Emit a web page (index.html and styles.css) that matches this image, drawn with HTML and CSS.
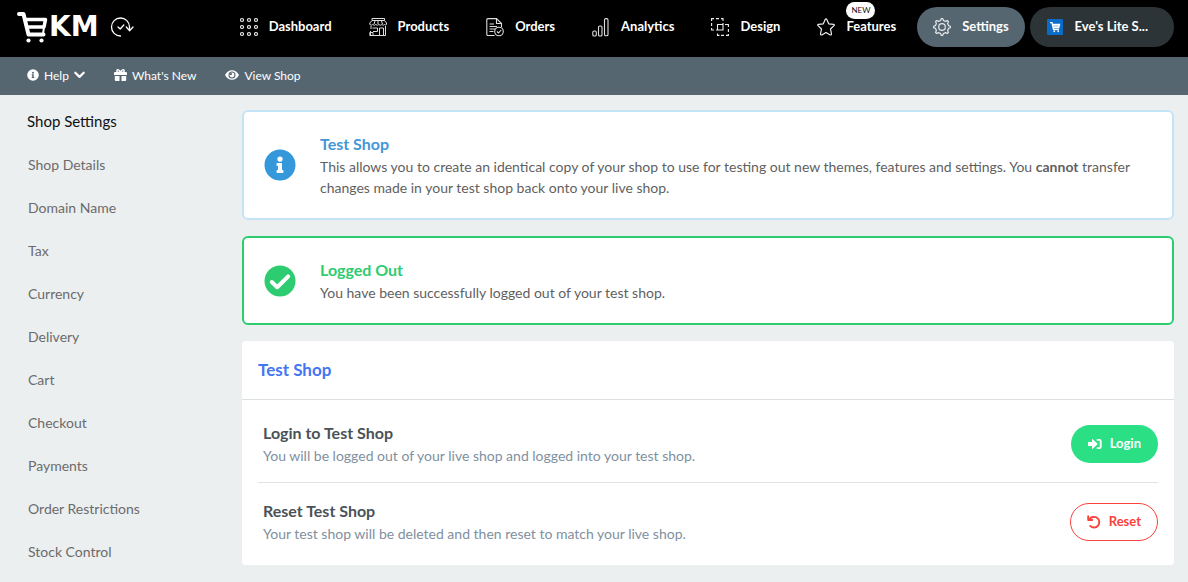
FILE: index.html
```html
<!DOCTYPE html>
<html lang="en">
<head>
<meta charset="utf-8">
<meta name="viewport" content="width=device-width, initial-scale=1">
<title>Test Shop</title>
<link rel="stylesheet" href="styles.css">
</head>
<body>
<header class="topbar">
  <a class="logo" href="#" aria-label="EKM home">
    <svg width="32" height="32" viewBox="0 0 32 32" fill="none" stroke="#fff" stroke-linecap="round" stroke-linejoin="round">
      <path d="M2 3H6.500L11.500 23.500H26.500" stroke-width="4"/>
      <path d="M8.500 8.500H28.500L27 16H12" stroke-width="3.500"/>
      <path d="M27 16L26 23" stroke-width="2"/>
      <circle cx="11.500" cy="29.500" r="2.100" fill="#fff" stroke="none"/>
      <circle cx="24.500" cy="29.500" r="2.100" fill="#fff" stroke="none"/>
    </svg>
    <span class="logo-text">KM</span>
  </a>
  <button class="sync" type="button" aria-label="Status">
    <svg width="24" height="22" viewBox="0 0 24 22" fill="none" stroke="#fff" stroke-width="1.300" stroke-linecap="round" stroke-linejoin="round">
      <path d="M10.500 20A9 9 0 1 1 19.500 11V14"/>
      <path d="M16.300 11L19.600 14.700L23 11"/>
      <path d="M8 11L10.200 13L13.800 9"/>
    </svg>
  </button>
  <nav class="mainnav" aria-label="Main">
    <a class="nav-item" href="#">
      <svg class="nav-icon" viewBox="0 0 18 18" fill="none" stroke="#eee" stroke-width="1.200"><circle cx="2" cy="2" r="1.500"/><circle cx="9" cy="2" r="1.500"/><circle cx="16" cy="2" r="1.500"/><circle cx="2" cy="9" r="1.500"/><circle cx="9" cy="9" r="1.500"/><circle cx="16" cy="9" r="1.500"/><circle cx="2" cy="16" r="1.500"/><circle cx="9" cy="16" r="1.500"/><circle cx="16" cy="16" r="1.500"/></svg>
      <span>Dashboard</span>
    </a>
    <a class="nav-item" href="#">
      <svg class="nav-icon" viewBox="0 0 18 18" fill="none" stroke="#ddd" stroke-width="1"><path d="M3 .5H15.500V2.500H3ZM3 2.500L.8 5V6.500Q2.300 8 3.800 6.500Q5.300 8 6.800 6.500Q8.300 8 9.800 6.500Q11.300 8 12.800 6.500Q14.300 8 15.500 6.500Q16.500 7.500 17.500 6.500V5L15.500 2.500M6 3L5 6M9 3V6M12.500 3L13.500 6M16.500 8V17.500H1.500V13M2 8V11M3.500 10H8.500V13.500H4M10.500 17V10H14.500V17M.8 14.500H4V17.500H.8Z"/></svg>
      <span>Products</span>
    </a>
    <a class="nav-item" href="#">
      <svg class="nav-icon" viewBox="0 0 18 18" fill="none" stroke="#ddd" stroke-width="1.100"><path d="M8.500 17.500H2Q.8 17.500.8 16V2Q.8.600 2 .6H10.500L15.500 5.500V9M10.500.6V5.500H15.500M3.500 6H8M3.500 8.500H11M3.500 11H9M3.500 13.500H7.500"/><circle cx="13" cy="13.500" r="4.300"/><path d="M11 13.500L12.500 15L15.200 12"/></svg>
      <span>Orders</span>
    </a>
    <a class="nav-item" href="#">
      <svg class="nav-icon" viewBox="0 0 18 18" fill="none" stroke="#ddd" stroke-width="1.100"><rect x=".8" y="13" width="3.500" height="5" rx="1.300"/><rect x="6.500" y="8" width="3.500" height="10" rx="1.300"/><rect x="12.500" y=".600" width="3.500" height="17.200" rx="1.300"/></svg>
      <span>Analytics</span>
    </a>
    <a class="nav-item" href="#">
      <svg class="nav-icon" viewBox="0 0 18 18" fill="none" stroke="#eee" stroke-width="1.100"><path d="M.6 3V.6H3M5 .6H8M10 .6H12V3M12 5V7M.6 5V8M.6 10V12H3M5 12H6.500M6.500 6.500H12V12H6.500ZM14 6.500H17.400V9M17.400 11V14M17.400 16V17.400H15M13 17.400H10M8.500 17.400H6.500V15.500"/></svg>
      <span>Design</span>
    </a>
    <a class="nav-item" href="#">
      <svg class="nav-icon" viewBox="0 0 18 18" fill="none" stroke="#eee" stroke-width="1.200" stroke-linejoin="round"><path d="M9 .8Q9.500.8 9.800 1.500L11.700 5.800L16.500 6.300Q17.800 6.600 17 7.600L13.500 11L14.500 15.800Q14.500 17.400 13.200 16.900L9 14.500L4.800 16.900Q3.500 17.400 3.500 15.800L4.500 11L1 7.600Q.2 6.600 1.500 6.300L6.300 5.800L8.200 1.500Q8.500.8 9 .8Z"/></svg>
      <span>Features</span>
      <span class="badge">NEW</span>
    </a>
    <a class="nav-item nav-active" href="#" aria-current="page">
      <svg class="nav-icon" viewBox="0 0 18 18" fill="none" stroke="#e4e8ea" stroke-width="1.200" stroke-linejoin="round"><circle cx="9" cy="9" r="3.300"/><path d="M7.600 2.500L8.200.6H9.800L10.400 2.500L12.600 3.400L14.400 2.500L15.500 3.600L14.600 5.400L15.500 7.600L17.400 8.200V9.800L15.500 10.400L14.600 12.600L15.500 14.400L14.400 15.500L12.600 14.600L10.400 15.500L9.800 17.400H8.200L7.600 15.500L5.400 14.600L3.600 15.500L2.500 14.400L3.400 12.600L2.500 10.400L.6 9.800V8.200L2.500 7.600L3.400 5.400L2.500 3.600L3.600 2.500L5.400 3.400Z"/></svg>
      <span>Settings</span>
    </a>
    <button class="account" type="button">
      <svg width="16" height="16" viewBox="0 0 16 16"><rect width="16" height="16" rx="1" fill="#0a6bc9"/><path d="M3 3.700H5L6.500 10.500H12M5.500 5.500H12.500L11.800 8.500H6.300" fill="none" stroke="#fff" stroke-width="1.300"/><path d="M5.500 5.500H12.500L11.800 8.500H6.300Z" fill="#fff" opacity=".7"/><circle cx="7.300" cy="12.300" r=".9" fill="#fff"/><circle cx="11.300" cy="12.300" r=".9" fill="#fff"/></svg>
      <span>Eve's Lite S...</span>
    </button>
  </nav>
</header>
<nav class="subbar" aria-label="Shortcuts">
  <button class="sub-item" type="button">
    <svg width="12" height="12" viewBox="0 0 512 512" fill="#fff"><path d="M256 8a248 248 0 1 0 0 496a248 248 0 1 0 0-496zm0 110a42 42 0 1 1 0 84a42 42 0 1 1 0-84zm56 254c0 7-5 12-12 12h-88c-7 0-12-5-12-12v-24c0-7 5-12 12-12h12v-64h-12c-7 0-12-5-12-12v-24c0-7 5-12 12-12h64c7 0 12 5 12 12v100h12c7 0 12 5 12 12z"/></svg>
    <span>Help</span>
    <svg width="11" height="8" viewBox="0 0 11 8" fill="none" stroke="#fff" stroke-width="2.200" stroke-linecap="round" stroke-linejoin="round"><path d="M1.300 1.700L5.500 5.900L9.700 1.700"/></svg>
  </button>
  <a class="sub-item" href="#">
    <svg width="13" height="12" viewBox="0 0 13 12"><path d="M0 4Q0 3 1 3H12Q13 3 13 4V6H0ZM.8 7H5.500V12H1.800Q.8 12 .8 11ZM7.500 7H12.200V11Q12.200 12 11.200 12H7.500Z" fill="#fff"/><path d="M6.500 3.500C5.500.5 3 0 2.800 1.900C2.700 3.300 4.500 3.500 6.500 3.500C8.500 3.500 10.300 3.300 10.200 1.900C10 0 7.500.5 6.500 3.500Z" fill="none" stroke="#fff" stroke-width="1.400"/></svg>
    <span>What's New</span>
  </a>
  <a class="sub-item" href="#">
    <svg width="14" height="10" viewBox="0 0 14 10"><path d="M0 5Q2.500.3 7 .3T14 5Q11.500 9.700 7 9.700T0 5Z" fill="#fff"/><circle cx="7" cy="5" r="3" fill="#fff" stroke="#556671" stroke-width="1.100"/><circle cx="6" cy="4.100" r="1.100" fill="#556671"/></svg>
    <span>View Shop</span>
  </a>
</nav>
<div class="layout">
  <aside class="sidebar">
    <h2 class="side-title">Shop Settings</h2>
    <ul class="side-list">
      <li><a href="#">Shop Details</a></li>
      <li><a href="#">Domain Name</a></li>
      <li><a href="#">Tax</a></li>
      <li><a href="#">Currency</a></li>
      <li><a href="#">Delivery</a></li>
      <li><a href="#">Cart</a></li>
      <li><a href="#">Checkout</a></li>
      <li><a href="#">Payments</a></li>
      <li><a href="#">Order Restrictions</a></li>
      <li><a href="#">Stock Control</a></li>
    </ul>
  </aside>
  <main class="content">
    <section class="notice notice-info">
      <svg class="notice-icon" viewBox="0 0 512 512" fill="#3498db"><path d="M256 8a248 248 0 1 0 0 496a248 248 0 1 0 0-496zm0 110a42 42 0 1 1 0 84a42 42 0 1 1 0-84zm56 254c0 7-5 12-12 12h-88c-7 0-12-5-12-12v-24c0-7 5-12 12-12h12v-64h-12c-7 0-12-5-12-12v-24c0-7 5-12 12-12h64c7 0 12 5 12 12v100h12c7 0 12 5 12 12z"/></svg>
      <div>
        <h3 class="notice-title">Test Shop</h3>
        <p class="notice-text">This allows you to create an identical copy of your shop to use for testing out new themes, features and settings. You <strong>cannot</strong> transfer changes made in your test shop back onto your live shop.</p>
      </div>
    </section>
    <section class="notice notice-success">
      <svg class="notice-icon" viewBox="0 0 32 32"><circle cx="16" cy="16" r="15.500" fill="#2ecc71"/><path d="M7.800 17L13.200 22.200L24.200 11.400" fill="none" stroke="#fff" stroke-width="4" stroke-linejoin="round" stroke-linecap="round"/></svg>
      <div>
        <h3 class="notice-title">Logged Out</h3>
        <p class="notice-text">You have been successfully logged out of your test shop.</p>
      </div>
    </section>
    <section class="panel">
      <h2 class="panel-title">Test Shop</h2>
      <div class="panel-body">
        <div class="row">
          <div>
            <h3 class="row-title">Login to Test Shop</h3>
            <p class="row-text">You will be logged out of your live shop and logged into your test shop.</p>
          </div>
          <button class="btn btn-login" type="button">
            <svg width="14" height="12" viewBox="0 0 14 12"><path d="M0 4.600Q0 4 .6 4H4V1.800Q4 .6 5 1.400L9.300 5.500Q9.700 6 9.300 6.500L5 10.600Q4 11.400 4 10.200V8H.6Q0 8 0 7.400Z" fill="#fff"/><path d="M9.500 1.900H11.500Q12.700 1.900 12.700 3V9Q12.700 10.100 11.500 10.100H9.500" fill="none" stroke="#fff" stroke-width="1.900" stroke-linecap="round"/></svg>
            <span>Login</span>
          </button>
        </div>
        <div class="row">
          <div>
            <h3 class="row-title">Reset Test Shop</h3>
            <p class="row-text">Your test shop will be deleted and then reset to match your live shop.</p>
          </div>
          <button class="btn btn-reset" type="button">
            <svg width="14" height="14" viewBox="0 0 14 14" fill="none" stroke="#f8423a" stroke-width="1.900" stroke-linecap="round"><path d="M2.300 4.700A5.300 5.300 0 1 1 3.200 10.900"/><path d="M1.200 1.300V5H5.200" stroke-linejoin="round"/></svg>
            <span>Reset</span>
          </button>
        </div>
      </div>
    </section>
  </main>
</div>
</body>
</html>
```

FILE: styles.css
```css
* { box-sizing: border-box; }
body {
  margin: 0;
  background: #ebeff0;
  color: #5a5a5a;
  font-family: Lato, "Liberation Sans", sans-serif;
  font-size: 14px;
}
h2, h3, p, ul { margin: 0; padding: 0; }
a { color: inherit; text-decoration: none; }
button { border: 0; background: none; padding: 0; color: inherit; font: inherit; cursor: pointer; }
svg { display: block; flex: none; }

.topbar {
  display: flex;
  align-items: center;
  height: 57px;
  padding: 0 14px 3px 17px;
  background: #000;
  color: #fff;
}
.logo { display: flex; align-items: center; }
.logo-text { font: bold 28px/32px "DejaVu Sans", sans-serif; }
.sync { margin-left: 11px; }
.mainnav {
  display: flex;
  align-items: center;
  gap: 5px;
  margin-left: auto;
  font-size: 13px;
  font-weight: 700;
}
.nav-item {
  position: relative;
  display: flex;
  align-items: center;
  gap: 11px;
  height: 40px;
  padding: 0 16px;
  border-radius: 20px;
}
.nav-item > span, .account > span { padding-bottom: 2px; }
.nav-icon { width: 18px; height: 18px; overflow: visible; }
.nav-active { background: #556671; }
.nav-item > .badge {
  position: absolute;
  top: -5px;
  left: 45px;
  height: 17px;
  padding: 0 5px;
  border-radius: 9px;
  background: #fff;
  color: #111;
  font-size: 8px;
  font-weight: 400;
  line-height: 17px;
}
.account {
  display: flex;
  align-items: center;
  gap: 12px;
  height: 40px;
  padding: 0 26px 0 17px;
  border-radius: 20px;
  background: #2c3437;
  font-weight: 700;
}

.subbar {
  display: flex;
  align-items: center;
  gap: 29px;
  height: 38px;
  padding: 0 27px 2px;
  background: #556671;
  color: #fff;
  font-size: 12px;
}
.sub-item { display: flex; align-items: center; gap: 5px; }

.layout { display: flex; }
.sidebar { flex: none; width: 242px; padding: 15px 16px 0 27px; }
.side-title { color: #111; font-size: 15px; font-weight: 400; line-height: 22px; }
.side-list { margin-top: 11px; padding-left: 1px; list-style: none; color: #6b6b6b; }
.side-list a { display: block; line-height: 43px; }

.content {
  display: flex;
  flex: 1;
  flex-direction: column;
  gap: 16px;
  min-width: 0;
  padding: 15px 14px 17px 0;
}
.notice {
  display: flex;
  align-items: center;
  gap: 24px;
  padding: 20px 24px 20px 20px;
  border: 2px solid;
  border-radius: 6px;
  background: #fff;
}
.notice-info { border-color: #c5e3f6; }
.notice-success { border-color: #2ecc71; }
.notice-icon { width: 32px; height: 32px; }
.notice-title { padding-bottom: 1px; font-size: 16px; font-weight: 700; line-height: 23px; }
.notice-info .notice-title { color: #4396d6; }
.notice-success .notice-title { color: #2ecc71; }
.notice-text { line-height: 21px; color: #5f5f5f; }

.panel { border-radius: 4px; background: #fff; }
.panel-title {
  padding: 0 16px;
  border-bottom: 1px solid #dcdfe0;
  color: #4475f2;
  font-size: 17px;
  font-weight: 700;
  line-height: 58px;
}
.panel-body { padding: 0 16px; }
.row {
  display: flex;
  align-items: center;
  justify-content: space-between;
  gap: 16px;
  padding: 21px 0 16px 5px;
}
.row + .row {
  position: relative;
  padding: 17px 0 21px 5px;
}
.row + .row::before {
  content: "";
  position: absolute;
  top: 0;
  left: 0;
  right: 0;
  height: 1px;
  background: #e1e4e6;
}
.row-title { color: #4a5257; font-size: 16px; font-weight: 700; line-height: 24px; }
.row-text { color: #8090a0; line-height: 21px; }
.btn {
  display: flex;
  align-items: center;
  gap: 8px;
  height: 38px;
  border-radius: 19px;
  font-size: 13px;
  font-weight: 700;
}
.btn > span { padding-bottom: 2px; }
.btn-login { padding: 0 17px; background: #2adf84; color: #fff; }
.btn-reset { padding: 0 16px; border: 1px solid #f8423a; color: #f8423a; }
```
